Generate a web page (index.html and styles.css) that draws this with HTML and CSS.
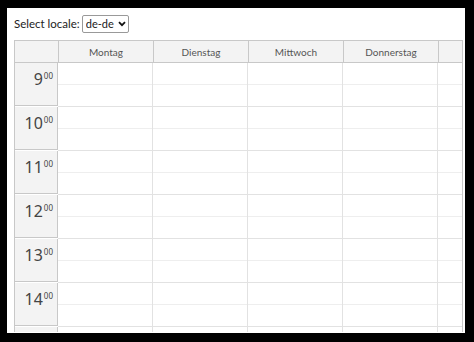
FILE: index.html
```html
<!DOCTYPE html>
<html>
<head>
    <meta charset="UTF-8">
    <title>Kalender</title>
    <link rel="stylesheet" href="styles.css">
</head>
<body>
    <div class="fenster">
        <div class="toolbar">
            <label for="locale">Select locale:</label>
            <span class="auswahl">
                <select id="locale">
                    <option>de-de</option>
                    <option>en-us</option>
                </select>
                <svg class="pfeil" width="8" height="6" viewBox="0 0 8 6"><path d="M1 1.2 L4 4.2 L7 1.2" fill="none" stroke="#111" stroke-width="1.8"/></svg>
            </span>
        </div>
        <div class="kalender">
            <div class="kopf">
                <div class="ecke"></div>
                <div class="tag">Montag</div>
                <div class="tag">Dienstag</div>
                <div class="tag">Mittwoch</div>
                <div class="tag">Donnerstag</div>
                <div class="tag"></div>
            </div>
            <div class="stunde">
                <div class="zeit">9<sup>00</sup></div>
                <div class="zelle"></div><div class="zelle"></div><div class="zelle"></div><div class="zelle"></div><div class="zelle"></div>
            </div>
            <div class="stunde">
                <div class="zeit">10<sup>00</sup></div>
                <div class="zelle"></div><div class="zelle"></div><div class="zelle"></div><div class="zelle"></div><div class="zelle"></div>
            </div>
            <div class="stunde">
                <div class="zeit">11<sup>00</sup></div>
                <div class="zelle"></div><div class="zelle"></div><div class="zelle"></div><div class="zelle"></div><div class="zelle"></div>
            </div>
            <div class="stunde">
                <div class="zeit">12<sup>00</sup></div>
                <div class="zelle"></div><div class="zelle"></div><div class="zelle"></div><div class="zelle"></div><div class="zelle"></div>
            </div>
            <div class="stunde">
                <div class="zeit">13<sup>00</sup></div>
                <div class="zelle"></div><div class="zelle"></div><div class="zelle"></div><div class="zelle"></div><div class="zelle"></div>
            </div>
            <div class="stunde">
                <div class="zeit">14<sup>00</sup></div>
                <div class="zelle"></div><div class="zelle"></div><div class="zelle"></div><div class="zelle"></div><div class="zelle"></div>
            </div>
            <div class="stunde">
                <div class="zeit"></div>
                <div class="zelle"></div><div class="zelle"></div><div class="zelle"></div><div class="zelle"></div><div class="zelle"></div>
            </div>
        </div>
    </div>
</body>
</html>
```

FILE: styles.css
```css
body{
    margin: 0;
    background: #000;
    font-family: "Noto Sans", sans-serif;
    color: #333;
}
.fenster{
    margin: 8px 9px 0 7px;
    height: 325px;
    background: #fff;
    padding: 5px 0 0 7px;
    box-sizing: border-box;
    overflow: hidden;
}
.toolbar{
    display: flex;
    align-items: center;
    gap: 2px;
    height: 21px;
    font-family: Lato, sans-serif;
    font-size: 11.5px;
    color: #222;
}
.auswahl{
    position: relative;
    display: inline-block;
}
.auswahl select{
    appearance: none;
    -webkit-appearance: none;
    display: block;
    font-family: Lato, sans-serif;
    font-size: 11px;
    height: 18px;
    width: 47px;
    padding: 0 0 0 3px;
    border: 1px solid #999;
    border-radius: 2px;
    background: #fff;
    color: #222;
}
.pfeil{
    position: absolute;
    right: 3px;
    top: 6px;
    pointer-events: none;
}
.kalender{
    margin-top: 6px;
    width: 449px;
    height: 292px;
    overflow: hidden;
    border: 1px solid #c8c8c8;
    border-bottom: 0;
    box-sizing: border-box;
}
.kopf, .stunde{
    display: flex;
}
.kopf{
    height: 22px;
    background: #f3f3f3;
    border-bottom: 1px solid #c8c8c8;
    box-sizing: border-box;
    font-family: Lato, sans-serif;
    font-size: 10px;
    color: #555;
}
.ecke{
    flex: 0 0 43px;
    border-right: 1px solid #c8c8c8;
}
.tag{
    flex: 0 0 94px;
    border-right: 1px solid #c8c8c8;
    display: flex;
    align-items: center;
    justify-content: center;
}
.zeit{
    flex: 0 0 43px;
    height: 43px;
    background: #f3f3f3;
    border-right: 1px solid #c8c8c8;
    border-bottom: 1px solid #c8c8c8;
    text-align: right;
    padding: 6px 4px 0 0;
    box-sizing: border-box;
    font-size: 16px;
    line-height: 20px;
    color: #444;
}
.zeit sup{
    font-size: 8px;
    vertical-align: 6px;
    line-height: 1;
    margin-left: 1px;
}
.zelle{
    flex: 0 0 94px;
    height: 43px;
    border-right: 1px solid #e2e2e2;
    border-bottom: 1px solid #e2e2e2;
    background: linear-gradient(#fff 21px, #eee 21px, #eee 22px, #fff 22px);
}
```
